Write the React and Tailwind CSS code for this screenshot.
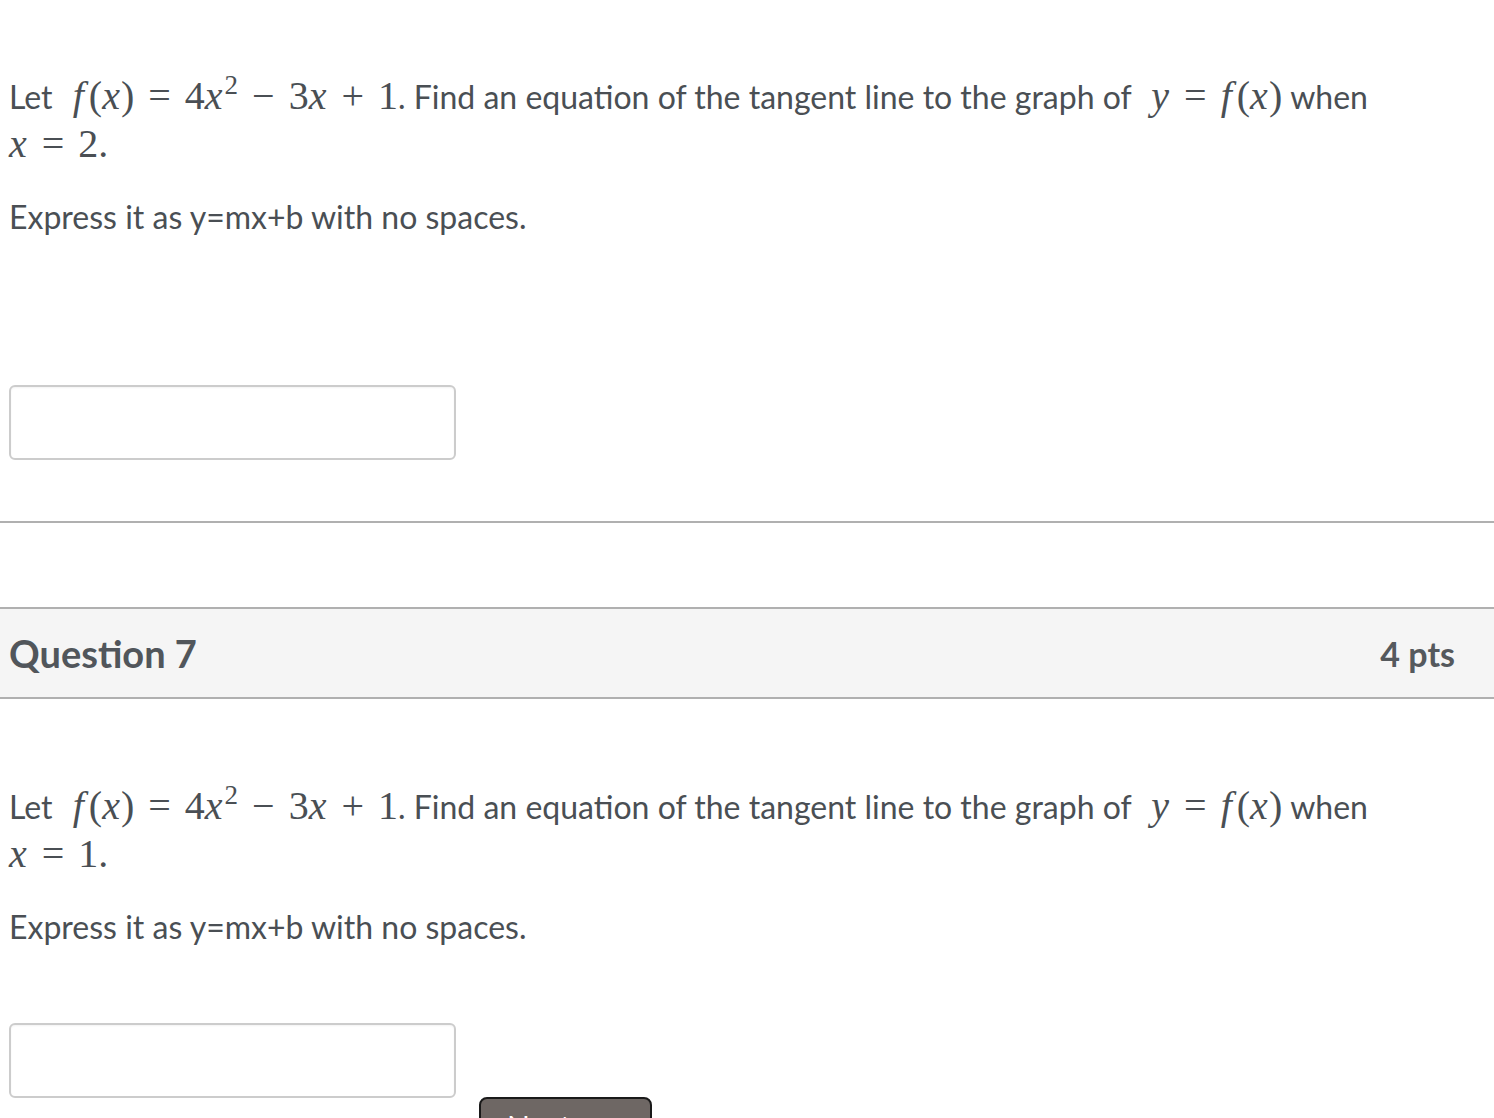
import React from "react";

const serif = { fontFamily: '"Liberation Serif", "DejaVu Serif", serif' };

// italic math variable
const V = ({ children }) => <i className="italic pr-[1px]">{children}</i>;
const Op = ({ children }) => <span className="mx-[14px] not-italic">{children}</span>;

const Fx = () => (
  <>
    <V>f</V>
    <span className="ml-[4px]">(</span>
    <V>x</V>
    <span>)</span>
  </>
);

const Problem = ({ xval }) => (
  <div className="text-[32px] leading-[48px] text-[#4a4f54]">
    <p>
      Let{" "}
      <span className="text-[40px] leading-[40px] ml-[12px]" style={serif}>
        <Fx />
        <Op>=</Op>4<V>x</V>
        <sup className="text-[27px] ml-[1px] -top-[15px]">2</sup>
        <Op>−</Op>3<V>x</V>
        <Op>+</Op>1
      </span>
      . Find an equation of the tangent line to the graph of{" "}
      <span className="text-[40px] leading-[40px] ml-[12px] mr-[8px]" style={serif}>
        <V>y</V>
        <Op>=</Op>
        <Fx />
      </span>
      when
      <br />
      <span className="text-[40px] leading-[40px]" style={serif}>
        <V>x</V>
        <Op>=</Op>
        {xval}.
      </span>
    </p>
    <p className="mt-[24px]">Express it as y=mx+b with no spaces.</p>
  </div>
);

const AnswerBox = () => (
  <input
    type="text"
    className="w-[447px] h-[75px] border-2 border-[#cccccc] rounded-[6px] bg-white outline-none shadow-[inset_0_1px_2px_rgba(0,0,0,0.05)]"
  />
);

export default function App() {
  return (
    <div
      className="w-[1494px] h-[1118px] overflow-hidden bg-white"
      style={{ fontFamily: 'Lato, "Liberation Sans", sans-serif' }}
    >
      <div className="pt-[73px] pl-[9px]">
        <Problem xval="2" />
        <div className="mt-[144px]">
          <AnswerBox />
        </div>
      </div>

      <div className="mt-[61px] h-[2px] bg-[#b0b0b0]" />

      <div className="mt-[84px] h-[92px] border-y-2 border-[#b0b0b0] bg-[#f5f5f5] flex items-center justify-between pl-[9px] pr-[39px]">
        <h2 className="text-[38px] font-bold text-[#51565b]">Question 7</h2>
        <span className="text-[34px] font-bold text-[#55595d]">4 pts</span>
      </div>

      <div className="pt-[84px] pl-[9px]">
        <Problem xval="1" />
        <div className="mt-[72px]">
          <AnswerBox />
        </div>
        <div className="ml-[470px] -mt-[1px]">
          <button className="w-[173px] h-[50px] rounded-[8px] border-2 border-[#1a1a1a] bg-[#6e6764] text-white text-[30px] leading-[30px] pt-[8px] text-left pl-[26px]">
            Next
          </button>
        </div>
      </div>
    </div>
  );
}
